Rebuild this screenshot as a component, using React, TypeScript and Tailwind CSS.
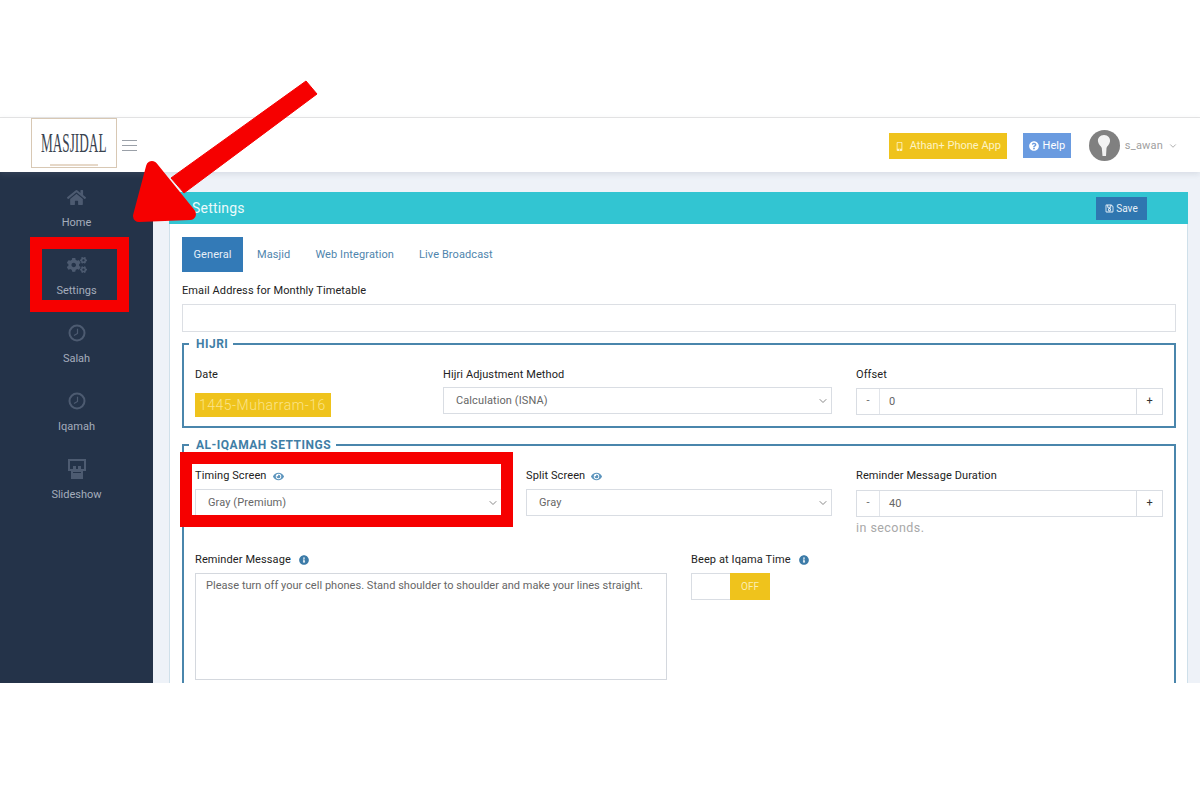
import React from "react";
import { FaHome, FaCogs, FaEye, FaInfoCircle, FaQuestionCircle, FaRegSave, FaMobileAlt } from "react-icons/fa";
import { ChevronDown } from "lucide-react";

function ClockIcon() {
  return (
    <svg width="18" height="18" viewBox="0 0 18 18" fill="none" stroke="#4d5b71" strokeWidth="2">
      <circle cx="9" cy="9" r="7.5" />
      <path d="M9.5 4.8V9.5L6 11.5" strokeWidth="1.2" />
    </svg>
  );
}

function SlideIcon() {
  return (
    <svg width="18" height="20" viewBox="0 0 18 20" fill="#4d5b71">
      <path d="M0 0H18V12H15V20H3V12H0ZM2 2V10H16V2Z" fillRule="evenodd" />
      <rect x="5" y="7" width="3" height="3" />
      <rect x="10" y="7" width="3" height="3" />
      <rect x="5" y="13" width="8" height="1" fill="#243349" />
    </svg>
  );
}

function NavItem({ icon, label }: { icon: React.ReactNode; label: string }) {
  return (
    <div className="h-[68px] flex flex-col items-center">
      <div className="h-[20px] flex items-center justify-center">{icon}</div>
      <div className="mt-[9px] text-[11px] leading-[14px] text-[#a4adbc]">{label}</div>
    </div>
  );
}

function Label({ children, icon }: { children: React.ReactNode; icon?: React.ReactNode }) {
  return (
    <div className="flex items-center h-[16px] text-[11px] leading-[16px] text-[#222] tracking-[0.1px]">
      <span>{children}</span>
      {icon}
    </div>
  );
}

const info = <FaInfoCircle className="ml-[8px] text-[#3c7ba8] text-[10px]" />;
const eye = <FaEye className="ml-[6px] text-[#5b94bd] text-[11px]" />;

function SelectBox({ value }: { value: string }) {
  return (
    <div className="h-[27px] border border-[#d9dde3] bg-white flex items-center justify-between pl-[12px] pr-[2px] pt-[1px] text-[11px] text-[#666] tracking-[0.1px]">
      <span>{value}</span>
      <ChevronDown size={12} className="text-[#888]" />
    </div>
  );
}

function Spinner({ value }: { value: string }) {
  return (
    <div className="h-[27px] border border-[#d9dde3] bg-white flex items-center text-[11px] text-[#666]">
      <div className="w-[23px] h-full flex items-center justify-center border-r border-[#e2e5ea]">-</div>
      <div className="flex-1 pl-[9px] pt-[1px]">{value}</div>
      <div className="w-[26px] h-full flex items-center justify-center border-l border-[#d9dde3] text-[#333]">+</div>
    </div>
  );
}

function Section({ title, children, className }: { title: string; children: React.ReactNode; className: string }) {
  return (
    <fieldset className={"min-w-0 border-2 border-[#4a86ac] pl-[11px] pr-[11px] " + className}>
      <legend className="-ml-[6px] pl-[7px] pr-[5px] pt-[1px] text-[12px] leading-[14px] font-bold text-[#3f7ea6] tracking-[0.5px]">{title}</legend>
      {children}
    </fieldset>
  );
}

export default function App() {
  return (
    <div className="relative w-[1200px] h-[800px] overflow-hidden bg-white font-['Roboto',sans-serif]">
      <div className="h-[118px] border-b border-[#e6e6e6]" />
      <header className="h-[54px] flex items-center bg-white shadow-[0_2px_6px_rgba(120,130,150,0.2)] relative z-10">
        <div className="relative ml-[31px] -mt-[4px] w-[86px] h-[50px] border border-[#d8c8b4] bg-white flex items-center justify-center overflow-hidden shrink-0">
          <span className="font-['Liberation_Serif',serif] text-[27px] font-normal text-[#3a4350] scale-x-[0.49] whitespace-nowrap">MASJIDAL</span>
          <div className="absolute left-[18px] right-[18px] bottom-[1px] h-[2px] bg-[#e6d8c8]" />
        </div>
        <div className="ml-[5px] w-[15px] flex flex-col gap-[4px]">
          <div className="h-px bg-[#9aa0a8]" />
          <div className="h-px bg-[#9aa0a8]" />
          <div className="h-px bg-[#9aa0a8]" />
        </div>
        <div className="ml-auto flex items-center pr-[22px] mt-[1px]">
          <div className="h-[26px] w-[118px] pt-[1px] bg-[#efc31c] text-[#fdf3c4] text-[11px] flex items-center justify-center gap-[6px]">
            <FaMobileAlt className="text-[9px]" />
            Athan+ Phone App
          </div>
          <div className="ml-[16px] h-[25px] w-[48px] pt-[1px] bg-[#6a9be0] text-white text-[11px] flex items-center justify-center gap-[4px]">
            <FaQuestionCircle className="text-[10px]" />
            Help
          </div>
          <div className="ml-[18px] w-[31px] h-[31px] rounded-full bg-[#808080] flex items-center justify-center">
            <svg width="14" height="22" viewBox="0 0 14 22" fill="#f2f2f2">
              <path d="M7 0C11 0 13.500 3 13 6.500C12.600 9.500 10 11 9.500 13L9 21H5.500L4.800 13C4 11 1.400 9.500 1 6.500C.5 3 3 0 7 0Z" />
            </svg>
          </div>
          <span className="ml-[5px] pt-[1px] text-[11px] text-[#a0a0a0] tracking-[0.2px]">s_awan</span>
          <ChevronDown size={10} className="ml-[5px] text-[#a0a0a0]" />
        </div>
      </header>
      <div className="h-[511px] flex overflow-hidden">
        <aside className="w-[153px] bg-[#243349] pt-[15px] shrink-0">
          <NavItem icon={<FaHome className="text-[#4d5b71] text-[19px]" />} label="Home" />
          <NavItem icon={<FaCogs className="text-[#4d5b71] text-[20px]" />} label="Settings" />
          <NavItem icon={<ClockIcon />} label="Salah" />
          <NavItem icon={<ClockIcon />} label="Iqamah" />
          <NavItem icon={<SlideIcon />} label="Slideshow" />
        </aside>
        <main className="flex-1 min-w-0 bg-[#eef2f8] pl-[16px] pr-[12px] pt-[20px]">
          <div className="bg-white border border-[#cfe0ea] h-[600px]">
            <div className="h-[32px] -m-px mb-0 bg-[#32c5d2] flex items-center justify-between pl-[23px] pr-[41px]">
              <span className="text-[14px] text-[#eafafb] tracking-[0.2px]">Settings</span>
              <div className="h-[23px] w-[51px] bg-[#2f76b0] text-[#e8f0f7] text-[10px] flex items-center justify-center gap-[2px]">
                <FaRegSave className="text-[9px]" />
                Save
              </div>
            </div>
            <div className="pl-[12px] pr-[11px] pt-[13px]">
              <div className="flex items-center text-[11px] text-[#4f85ad] tracking-[0.1px]">
                <div className="h-[35px] w-[61px] pt-[1px] bg-[#337ab7] text-[#e6eff7] flex items-center justify-center">General</div>
                <div className="ml-[14px] mt-[1px]">Masjid</div>
                <div className="ml-[25px] mt-[1px]">Web Integration</div>
                <div className="ml-[25px] mt-[1px]">Live Broadcast</div>
              </div>
              <div className="mt-[11px]">
                <Label>Email Address for Monthly Timetable</Label>
              </div>
              <div className="mt-[5px] h-[28px] border border-[#dcdfe4] bg-white" />
              <Section title="HIJRI" className="mt-[4px] h-[92px]">
                <div className="grid grid-cols-[224px_389px_307px] gap-x-[24px] pt-[16px]">
                  <div>
                    <Label>Date</Label>
                    <div className="mt-[10px] w-[136px] h-[24px] bg-[#efc31c] text-[#fbe38a] text-[14px] font-light leading-[24px] pl-[4px] tracking-[0.5px]">1445-Muharram-16</div>
                  </div>
                  <div>
                    <Label>Hijri Adjustment Method</Label>
                    <div className="mt-[4px]"><SelectBox value="Calculation (ISNA)" /></div>
                  </div>
                  <div>
                    <Label>Offset</Label>
                    <div className="mt-[5px]"><Spinner value="0" /></div>
                  </div>
                </div>
              </Section>
              <Section title="AL-IQAMAH SETTINGS" className="mt-[9px] h-[300px]">
                <div className="grid grid-cols-[307px_306px_307px] gap-x-[24px] pt-[16px]">
                  <div>
                    <Label icon={eye}>Timing Screen</Label>
                    <div className="mt-[5px]"><SelectBox value="Gray (Premium)" /></div>
                  </div>
                  <div>
                    <Label icon={eye}>Split Screen</Label>
                    <div className="mt-[5px]"><SelectBox value="Gray" /></div>
                  </div>
                  <div>
                    <Label>Reminder Message Duration</Label>
                    <div className="mt-[6px]"><Spinner value="40" /></div>
                    <div className="mt-[3px] text-[12.500px] leading-[16px] text-[#a8a8a8] tracking-[0.45px]">in seconds.</div>
                  </div>
                </div>
                <div className="flex mt-[16px]">
                  <div className="w-[472px]">
                    <Label icon={info}>Reminder Message</Label>
                    <div className="mt-[5px] h-[107px] border border-[#d4d8de] px-[10px] py-[4px] text-[11px] leading-[16px] text-[#666] tracking-[0.03px]">
                      Please turn off your cell phones. Stand shoulder to shoulder and make your lines straight.
                    </div>
                  </div>
                  <div className="ml-[24px]">
                    <Label icon={info}>Beep at Iqama Time</Label>
                    <div className="mt-[5px] w-[79px] h-[27px] border border-[#d9dde3] flex">
                      <div className="flex-1" />
                      <div className="w-[40px] -my-px -mr-px bg-[#efc31c] text-[#fbeeb0] text-[10px] flex items-center justify-center">OFF</div>
                    </div>
                  </div>
                </div>
              </Section>
            </div>
          </div>
        </main>
      </div>
      <div className="absolute left-[30px] top-[237px] w-[99px] h-[75px] border-[12px] border-[#f60000]" />
      <div className="absolute left-[180px] top-[452px] w-[333px] h-[75px] border-[12px] border-[#f60000]" />
      <svg className="absolute left-0 top-0 z-20" width="1200" height="800" fill="#f60000" stroke="#f60000">
        <polygon points="306,81 317,94 184,193 171,178" strokeWidth="1" />
        <polygon points="152,167 190,214 139,216" strokeWidth="12" strokeLinejoin="round" />
      </svg>
    </div>
  );
}
